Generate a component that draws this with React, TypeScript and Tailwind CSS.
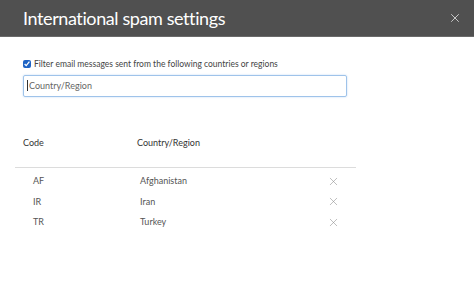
import { X } from 'lucide-react';

const rows = [
  { code: 'AF', name: 'Afghanistan' },
  { code: 'IR', name: 'Iran' },
  { code: 'TR', name: 'Turkey' },
];

export default function App() {
  return (
    <div className="w-[474px] h-[289px] bg-white overflow-hidden font-['Lato',_'Liberation_Sans',_sans-serif]">
      <div className="h-[37px] bg-[#505050] border-b border-[#6a6a6a] flex items-center justify-between pl-[23px] pr-[12px]">
        <h1 className="text-[18px] tracking-[-0.4px] text-white leading-none">International spam settings</h1>
        <X className="w-[14px] h-[14px] text-[#d8d8d8]" strokeWidth={1.5} />
      </div>

      <div className="pl-[23px] pt-[21px]">
        <label className="flex items-center gap-[3px] text-[8.5px] text-[#444]">
          <input type="checkbox" defaultChecked className="w-[8px] h-[8px] m-0 accent-[#1e63c4]" />
          Filter email messages sent from the following countries or regions
        </label>
        <div className="mt-[4px] w-[324px] h-[22px] border border-[#9fc3ea] rounded-[2px] shadow-[0_0_2px_#b9d5f2] flex items-center pl-[3px] text-[9px] text-[#666]">
          <span className="w-px h-[11px] bg-[#333] mr-px" />
          Country/Region
        </div>
      </div>

      <div className="mt-[36px]">
        <div className="flex text-[9px] text-[#333] pl-[23px] h-[20px] items-center">
          <span className="w-[114px]">Code</span>
          <span>Country/Region</span>
        </div>
        <div className="ml-[15px] w-[341px] h-px bg-[#dcdcdc] mt-[14px]" />
        <div className="pt-[3px]">
          {rows.map((r) => (
            <div key={r.code} className="flex items-center h-[20.5px] text-[9px] text-[#555]">
              <span className="w-[140px] pl-[33px]">{r.code}</span>
              <span className="w-[187px]">{r.name}</span>
              <X className="w-[13px] h-[13px] text-[#888]" strokeWidth={1} />
            </div>
          ))}
        </div>
      </div>
    </div>
  );
}
